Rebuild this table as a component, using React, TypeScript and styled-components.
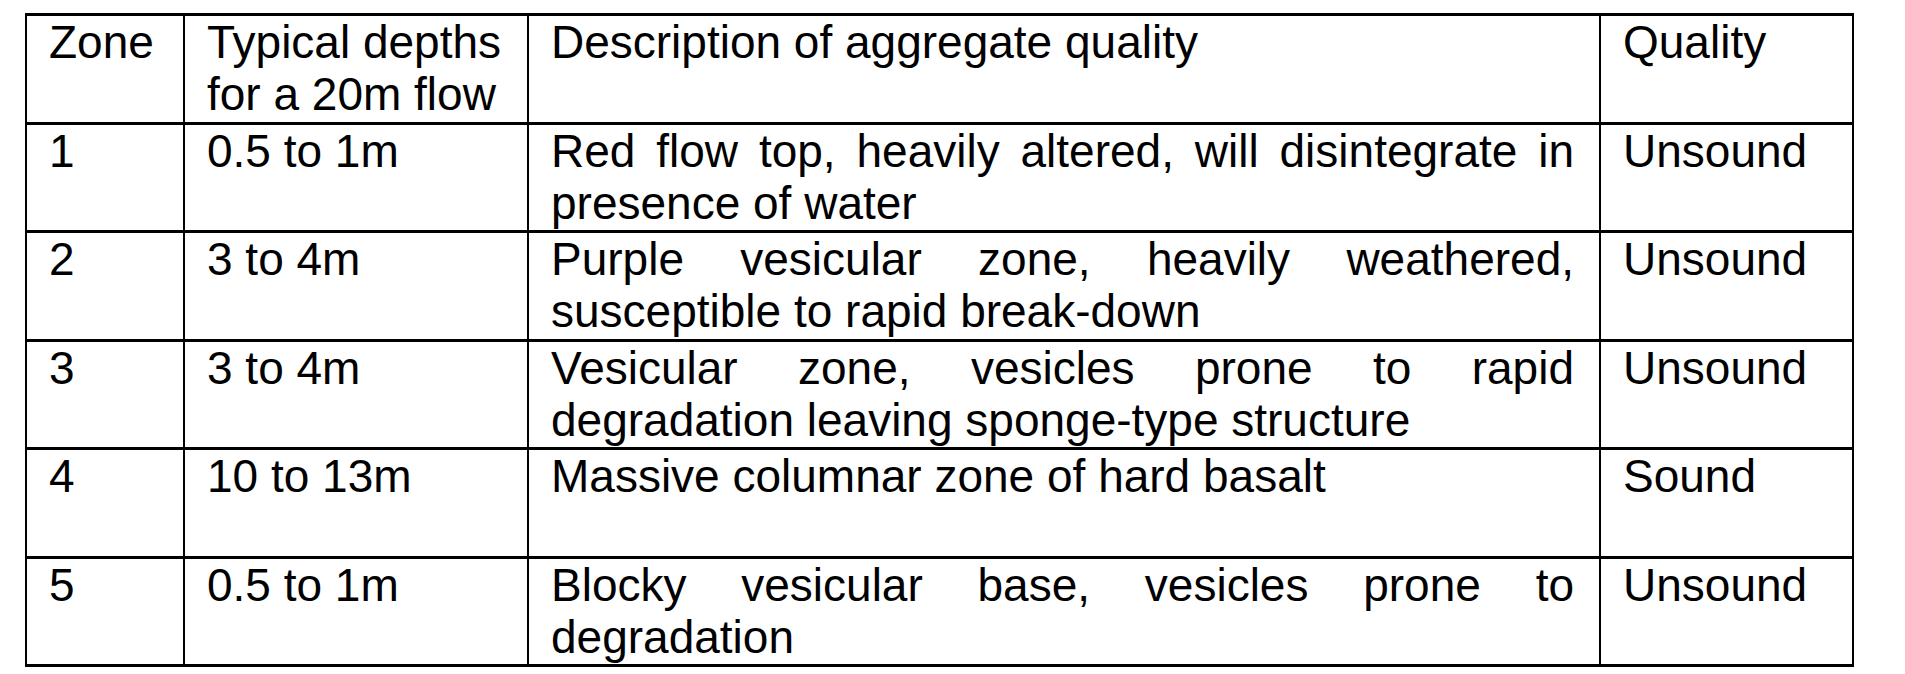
import React from 'react';
import styled, { createGlobalStyle } from 'styled-components';

const GlobalStyle = createGlobalStyle`
  html, body {
    margin: 0;
    padding: 0;
    background: #ffffff;
  }
  body {
    font-family: 'Liberation Sans', Arial, Helvetica, sans-serif;
    color: #000000;
  }
`;

const Page = styled.div`
  padding: 13px 0 0 25px;
`;

const Table = styled.table`
  border-collapse: collapse;
  table-layout: fixed;
  width: 1827px;
  font-size: 46px;
  line-height: 52px;
`;

const Row = styled.tr`
  height: 108.5px;
`;

const Cell = styled.td<{ $justify?: boolean }>`
  border-top: 3px solid #000;
  border-bottom: 3px solid #000;
  border-left: 2px solid #000;
  border-right: 2px solid #000;
  padding: 0 ${(p) => (p.$justify ? '25px' : '10px')} 0 22px;
  vertical-align: top;
  text-align: ${(p) => (p.$justify ? 'justify' : 'left')};
  font-weight: normal;
`;

const HeadCell = styled(Cell).attrs({ as: 'th' })``;

const columns = [158, 344, 1072, 253];

const rows = [
  {
    zone: '1',
    depth: '0.5 to 1m',
    text: 'Red flow top, heavily altered, will disintegrate in presence of water',
    quality: 'Unsound',
  },
  {
    zone: '2',
    depth: '3 to 4m',
    text: 'Purple vesicular zone, heavily weathered, susceptible to rapid break-down',
    quality: 'Unsound',
  },
  {
    zone: '3',
    depth: '3 to 4m',
    text: 'Vesicular zone, vesicles prone to rapid degradation leaving sponge-type structure',
    quality: 'Unsound',
  },
  {
    zone: '4',
    depth: '10 to 13m',
    text: 'Massive columnar zone of hard basalt',
    quality: 'Sound',
  },
  {
    zone: '5',
    depth: '0.5 to 1m',
    text: 'Blocky vesicular base, vesicles prone to degradation',
    quality: 'Unsound',
  },
];

export default function App(): JSX.Element {
  return (
    <Page>
      <GlobalStyle />
      <Table>
        <colgroup>
          {columns.map((w, i) => (
            <col key={i} style={{ width: w }} />
          ))}
        </colgroup>
        <thead>
          <Row>
            <HeadCell>Zone</HeadCell>
            <HeadCell>
              Typical depths
              <br />
              for a 20m flow
            </HeadCell>
            <HeadCell>Description of aggregate quality</HeadCell>
            <HeadCell>Quality</HeadCell>
          </Row>
        </thead>
        <tbody>
          {rows.map((r) => (
            <Row key={r.zone}>
              <Cell>{r.zone}</Cell>
              <Cell>{r.depth}</Cell>
              <Cell $justify>{r.text}</Cell>
              <Cell>{r.quality}</Cell>
            </Row>
          ))}
        </tbody>
      </Table>
    </Page>
  );
}
